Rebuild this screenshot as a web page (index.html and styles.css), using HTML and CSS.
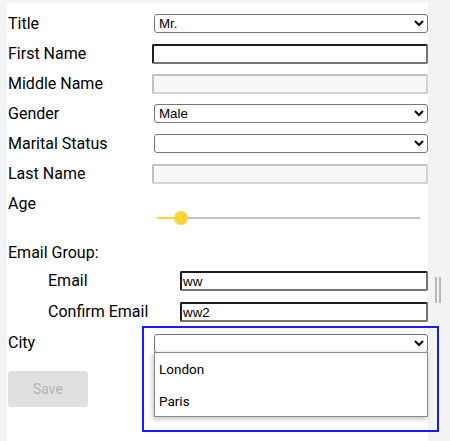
FILE: index.html
```html
<!DOCTYPE html>
<html>
<head>
<meta charset="utf-8">
<link rel="stylesheet" href="styles.css">
</head>
<body>
<div class="panel">
  <div class="row">
    <label class="lbl">Title</label>
    <select class="sel"><option>Mr.</option></select>
  </div>
  <div class="row">
    <label class="lbl">First Name</label>
    <input class="inp" type="text">
  </div>
  <div class="row">
    <label class="lbl">Middle Name</label>
    <input class="inp inp-disabled" type="text" disabled>
  </div>
  <div class="row">
    <label class="lbl">Gender</label>
    <select class="sel"><option>Male</option></select>
  </div>
  <div class="row">
    <label class="lbl">Marital Status</label>
    <select class="sel"><option></option></select>
  </div>
  <div class="row">
    <label class="lbl">Last Name</label>
    <input class="inp inp-disabled" type="text" disabled>
  </div>
  <div class="row row-age">
    <label class="lbl">Age</label>
    <div class="slider">
      <div class="track"><div class="fill"></div></div>
      <div class="thumb"></div>
    </div>
  </div>
  <div class="row row-group">
    <label class="lbl">Email Group:</label>
  </div>
  <div class="row row-sub">
    <label class="lbl lbl-sub">Email</label>
    <input class="inp inp-sub" type="text" value="ww">
  </div>
  <div class="row row-sub">
    <label class="lbl lbl-sub">Confirm Email</label>
    <input class="inp inp-sub" type="text" value="ww2">
  </div>
  <div class="row row-city">
    <label class="lbl">City</label>
    <div class="city">
      <select class="sel"><option></option></select>
      <div class="list">
        <div class="item">London</div>
        <div class="item">Paris</div>
      </div>
    </div>
  </div>
  <div class="actions">
    <button class="btn" disabled>Save</button>
  </div>
</div>
<div class="grip"><span></span><span></span></div>
<div class="highlight"></div>
</body>
</html>
```

FILE: styles.css
```css
html, body {
  margin: 0;
  padding: 0;
}
body {
  background: #f2f3f5;
  width: 450px;
  height: 441px;
  overflow: hidden;
  font-family: Roboto, "Liberation Sans", sans-serif;
}
.panel {
  margin: 3px 0 0 7px;
  width: 421px;
  height: 438px;
  background: #ffffff;
  box-sizing: border-box;
  padding: 11px 0 0 1px;
}
.row {
  display: flex;
  align-items: flex-start;
  height: 30px;
}
.lbl {
  width: 144px;
  flex: none;
  font-size: 16px;
  line-height: 19px;
  color: #000;
}
.sel {
  margin: 0 0 0 2px;
  width: 274px;
  height: 19px;
  font-family: Arial, "Liberation Sans", sans-serif;
  font-size: 13.33px;
  color: #000;
  background: #fff;
  border: 1px solid #767676;
  border-radius: 3px;
  box-sizing: border-box;
}
.inp {
  margin: 0;
  width: 276px;
  height: 20px;
  box-sizing: border-box;
  padding: 1px 1px;
  font-family: Arial, "Liberation Sans", sans-serif;
  font-size: 13.33px;
  color: #000;
  background: #fff;
  border: 2px solid;
  border-color: #1f1f1f #767676 #767676 #1f1f1f;
  border-radius: 2px;
  outline: none;
}
.inp-disabled {
  background: #f8f8f8;
  border-color: #c2c2c2 #d4d4d4 #d4d4d4 #c2c2c2;
}
.row-age {
  height: 49px;
}
.slider {
  position: relative;
  margin-left: 5px;
  width: 263px;
  height: 49px;
}
.track {
  margin-top: 23px;
  height: 2px;
  background: #c2c2c2;
}
.fill {
  width: 24px;
  height: 2px;
  background: #fdd835;
}
.thumb {
  position: absolute;
  left: 17px;
  top: 17px;
  width: 14px;
  height: 14px;
  border-radius: 50%;
  background: #fdd43a;
}
.row-group {
  height: 28px;
}
.row-sub {
  height: 31px;
}
.lbl-sub {
  width: 132px;
  padding-left: 40px;
}
.inp-sub {
  width: 248px;
}
.row-city {
  height: 38px;
}
.city {
  position: relative;
}
.list {
  position: absolute;
  left: 2px;
  top: 19px;
  width: 274px;
  height: 65px;
  box-sizing: border-box;
  background: #fff;
  border: 1px solid #8a8a8a;
  box-shadow: -1px 2px 5px rgba(0, 0, 0, 0.25);
  z-index: 2;
}
.item {
  height: 32px;
  line-height: 33px;
  padding-left: 4px;
  font-size: 13.5px;
  color: #000;
}
.actions {
  display: flex;
}
.btn {
  width: 80px;
  height: 36px;
  border: none;
  border-radius: 4px;
  background: #e0e0e0;
  color: #b3b3b3;
  font-family: Roboto, "Liberation Sans", sans-serif;
  font-size: 14px;
  padding: 0;
}
.grip {
  position: absolute;
  left: 435px;
  top: 277px;
  display: flex;
  gap: 2px;
}
.grip span {
  display: block;
  width: 2px;
  height: 26px;
  background: #b8b8b8;
}
.highlight {
  position: absolute;
  left: 142px;
  top: 326px;
  width: 297px;
  height: 106px;
  box-sizing: border-box;
  border: 2px solid #1a1aff;
  pointer-events: none;
}
```
